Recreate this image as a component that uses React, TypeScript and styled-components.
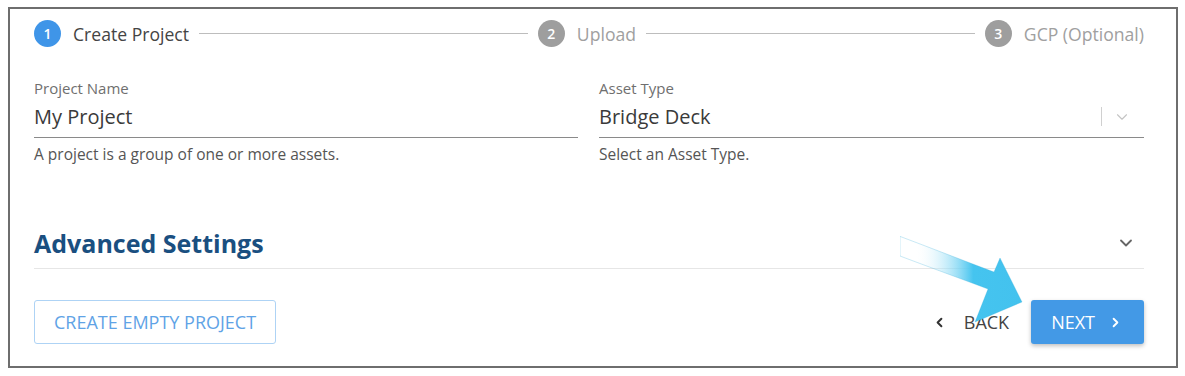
import React from "react";
import styled, { createGlobalStyle } from "styled-components";
import { ChevronDown, ChevronLeft, ChevronRight } from "lucide-react";

const GlobalStyle = createGlobalStyle`
  html, body {
    margin: 0;
    padding: 0;
    background: #fff;
    font-family: "Open Sans", "Noto Sans", sans-serif;
  }
  * { box-sizing: border-box; }
`;

const steps = [
  { n: 1, label: "Create Project", active: true },
  { n: 2, label: "Upload", active: false },
  { n: 3, label: "GCP (Optional)", active: false },
];

export default function App() {
  return (
    <>
      <GlobalStyle />
      <Frame>
        <Stepper>
          {steps.map((s, i) => (
            <React.Fragment key={s.n}>
              {i > 0 && <StepLine />}
              <Step>
                <StepCircle $active={s.active}>{s.n}</StepCircle>
                <StepLabel $active={s.active}>{s.label}</StepLabel>
              </Step>
            </React.Fragment>
          ))}
        </Stepper>

        <Fields>
          <Field>
            <FieldLabel>Project Name</FieldLabel>
            <InputBox>
              <InputText>My Project</InputText>
            </InputBox>
            <Helper>A project is a group of one or more assets.</Helper>
          </Field>
          <Field>
            <FieldLabel>Asset Type</FieldLabel>
            <InputBox>
              <InputText>Bridge Deck</InputText>
              <SelectIndicator>
                <Separator />
                <ChevronDown size={18} strokeWidth={1.5} color="#c4c4c4" />
              </SelectIndicator>
            </InputBox>
            <Helper>Select an Asset Type.</Helper>
          </Field>
        </Fields>

        <Advanced>
          <AdvancedTitle>Advanced Settings</AdvancedTitle>
          <ChevronDown size={20} strokeWidth={2.2} color="#666" />
        </Advanced>

        <Footer>
          <OutlineButton>CREATE EMPTY PROJECT</OutlineButton>
          <Actions>
            <BackButton>
              <ChevronLeft size={15} strokeWidth={3.2} color="#333" />
              BACK
            </BackButton>
            <NextButton>
              NEXT
              <ChevronRight size={15} strokeWidth={3} color="#fff" />
            </NextButton>
          </Actions>
        </Footer>

        <Pointer width="140" height="100" viewBox="0 0 140 100">
          <defs>
            <linearGradient id="arrowFill" x1="0" y1="0" x2="1" y2="0">
              <stop offset="0.12" stopColor="#ffffff" stopOpacity="0" />
              <stop offset="0.6" stopColor="#45c4ef" />
              <stop offset="1" stopColor="#43c2ee" />
            </linearGradient>
          </defs>
          <polygon
            points="0,1.4 94,37 100,23 122,67 75,87 88,54 0,21"
            fill="url(#arrowFill)"
            stroke="#36addb"
            strokeOpacity="0.45"
            strokeWidth="0.6"
          />
        </Pointer>
      </Frame>
    </>
  );
}

const Frame = styled.div`
  position: relative;
  margin: 7px 0 0 8px;
  width: 1170px;
  height: 361px;
  border: 2px solid #6e6e6e;
  padding: 10px 32px 0 24px;
  display: flex;
  flex-direction: column;
`;

const Stepper = styled.div`
  display: flex;
  align-items: center;
  height: 29px;
`;

const Step = styled.div`
  display: flex;
  align-items: center;
  gap: 12px;
`;

const StepCircle = styled.div<{ $active: boolean }>`
  width: 27px;
  height: 27px;
  border-radius: 50%;
  background: ${(p) => (p.$active ? "#3f95e8" : "#9e9e9e")};
  color: #fff;
  font-size: 14px;
  font-weight: 600;
  display: flex;
  align-items: center;
  justify-content: center;
`;

const StepLabel = styled.span<{ $active: boolean }>`
  font-size: 17.6px;
  color: ${(p) => (p.$active ? "#444" : "#a0a0a0")};
`;

const StepLine = styled.div`
  flex: 1;
  height: 1px;
  background: #bdbdbd;
  margin: 0 10px;
`;

const Fields = styled.div`
  display: grid;
  grid-template-columns: 544px 545px;
  column-gap: 21px;
  margin-top: 30px;
`;

const Field = styled.div`
  display: flex;
  flex-direction: column;
`;

const FieldLabel = styled.label`
  font-size: 15px;
  line-height: 20px;
  color: #6f6f6f;
`;

const InputBox = styled.div`
  display: flex;
  align-items: center;
  height: 40px;
  padding: 0 0 2px;
  border-bottom: 1px solid #8a8a8a;
`;

const InputText = styled.div`
  flex: 1;
  font-size: 20px;
  line-height: 26px;
  color: #3a3a3a;
`;

const SelectIndicator = styled.div`
  display: flex;
  align-items: center;
  gap: 11px;
  padding-right: 13px;
`;

const Separator = styled.div`
  width: 1px;
  height: 19px;
  background: #d0d0d0;
`;

const Helper = styled.div`
  margin-top: 6px;
  font-size: 15.5px;
  line-height: 20px;
  color: #555;
`;

const Advanced = styled.div`
  display: flex;
  align-items: center;
  justify-content: space-between;
  margin-top: 63px;
  padding: 0 8px 9px 0;
  border-bottom: 1px solid #e6e6e6;
`;

const AdvancedTitle = styled.h2`
  margin: 0;
  font-size: 25px;
  line-height: 32px;
  font-weight: 700;
  color: #1a4f80;
`;

const Footer = styled.div`
  display: flex;
  align-items: center;
  justify-content: space-between;
  margin-top: 31px;
`;

const OutlineButton = styled.button`
  height: 44px;
  padding: 0 19px;
  border: 1px solid #aed3f5;
  border-radius: 3px;
  background: #fff;
  color: #5fa3e6;
  font-family: inherit;
  font-size: 18px;
`;

const Actions = styled.div`
  display: flex;
  align-items: center;
  gap: 22px;
`;

const BackButton = styled.button`
  display: flex;
  align-items: center;
  gap: 17px;
  border: none;
  background: transparent;
  padding: 0;
  color: #444;
  font-family: inherit;
  font-size: 18px;
`;

const NextButton = styled.button`
  display: flex;
  align-items: center;
  gap: 13px;
  height: 44px;
  padding: 0 21px 0 20px;
  border: none;
  border-radius: 3px;
  background: #4399e6;
  color: #fff;
  font-family: inherit;
  font-size: 18px;
  box-shadow: 0 2px 4px rgba(0, 0, 0, 0.25);
`;

const Pointer = styled.svg`
  position: absolute;
  left: 890px;
  top: 226px;
  pointer-events: none;
`;
